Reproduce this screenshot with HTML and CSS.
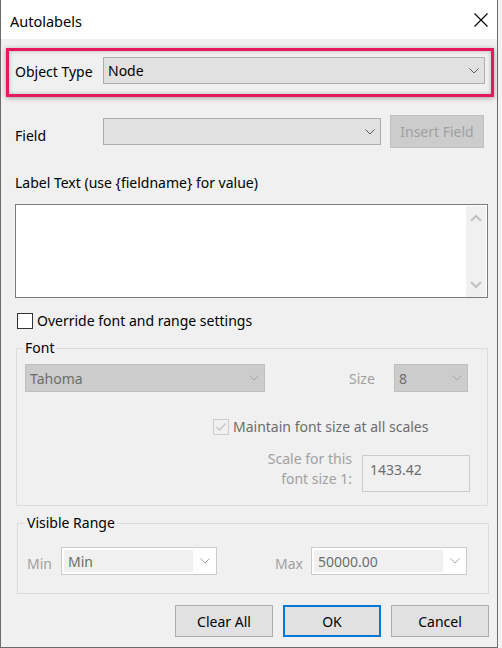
FILE: index.html
```html
<!DOCTYPE html>
<html>
<head>
<meta charset="utf-8">
<title>Autolabels</title>
<link rel="stylesheet" href="styles.css">
</head>
<body>
<div class="window">
  <div class="titlebar">
    <span class="title">Autolabels</span>
    <svg class="close" width="14" height="14" viewBox="0 0 14 14"><path d="M0.5 0.5 L13.5 13.5 M13.5 0.5 L0.5 13.5" stroke="#000" stroke-width="1.1" fill="none"/></svg>
  </div>
  <div class="main">
    <div class="highlight">
      <span class="lbl lbl-obj">Object Type</span>
      <div class="select grow">
        <span class="sel-text">Node</span>
        <svg class="chev" width="10" height="6" viewBox="0 0 10 6"><path d="M0.5 0.5 L5 5 L9.5 0.5" stroke="#5a5a5a" stroke-width="1" fill="none"/></svg>
      </div>
    </div>

    <div class="row-field">
      <span class="lbl lbl-low">Field</span>
      <div class="select field-select">
        <span></span>
        <svg class="chev" width="10" height="6" viewBox="0 0 10 6"><path d="M0.5 0.5 L5 5 L9.5 0.5" stroke="#5a5a5a" stroke-width="1" fill="none"/></svg>
      </div>
      <div class="btn-disabled">Insert Field</div>
    </div>

    <div class="label-text">Label Text (use {fieldname} for value)</div>

    <div class="textarea">
      <div class="text-body"></div>
      <div class="vscroll">
        <svg width="12" height="8" viewBox="0 0 12 8"><path d="M1 7 L6 2 L11 7" stroke="#c2c2c2" stroke-width="2" fill="none"/></svg>
        <svg width="12" height="8" viewBox="0 0 12 8"><path d="M1 1 L6 6 L11 1" stroke="#c2c2c2" stroke-width="2" fill="none"/></svg>
      </div>
    </div>

    <div class="check-row">
      <span class="checkbox"></span>
      <span>Override font and range settings</span>
    </div>

    <fieldset class="group font-group">
      <legend>Font</legend>
      <div class="font-row">
        <div class="select disabled font-select">
          <span class="sel-text">Tahoma</span>
          <svg class="chev" width="10" height="6" viewBox="0 0 10 6"><path d="M0.5 0.5 L5 5 L9.5 0.5" stroke="#a6a6a6" stroke-width="1" fill="none"/></svg>
        </div>
        <span class="size-lbl">Size</span>
        <div class="select disabled size-select">
          <span class="sel-text">8</span>
          <svg class="chev" width="10" height="6" viewBox="0 0 10 6"><path d="M0.5 0.5 L5 5 L9.5 0.5" stroke="#a6a6a6" stroke-width="1" fill="none"/></svg>
        </div>
      </div>
      <div class="maintain-row">
        <span class="checkbox checked">
          <svg width="14" height="14" viewBox="0 0 14 14"><path d="M2.5 7 L5.5 10 L11.5 3.5" stroke="#c8c8c8" stroke-width="1.4" fill="none"/></svg>
        </span>
        <span class="maintain-lbl">Maintain font size at all scales</span>
      </div>
      <div class="scale-row">
        <span class="scale-lbl">Scale for this<br>font size 1:</span>
        <div class="scale-box">1433.42</div>
      </div>
    </fieldset>

    <fieldset class="group range-group">
      <legend>Visible Range</legend>
      <div class="range-row">
        <span class="range-lbl min-lbl">Min</span>
        <div class="combo">
          <span class="combo-edit">Min</span>
          <span class="combo-arrow"><svg width="10" height="6" viewBox="0 0 10 6"><path d="M0.5 0.5 L5 5 L9.5 0.5" stroke="#a6a6a6" stroke-width="1" fill="none"/></svg></span>
        </div>
        <span class="range-lbl max-lbl">Max</span>
        <div class="combo">
          <span class="combo-edit">50000.00</span>
          <span class="combo-arrow"><svg width="10" height="6" viewBox="0 0 10 6"><path d="M0.5 0.5 L5 5 L9.5 0.5" stroke="#a6a6a6" stroke-width="1" fill="none"/></svg></span>
        </div>
      </div>
    </fieldset>

    <div class="buttons">
      <div class="btn">Clear All</div>
      <div class="btn default">OK</div>
      <div class="btn">Cancel</div>
    </div>
  </div>
</div>
</body>
</html>
```

FILE: styles.css
```css
* { box-sizing: border-box; }

body {
  margin: 0;
  background: #f3f3f3;
  font-family: "Noto Sans", "Open Sans", sans-serif;
  font-size: 14px;
  line-height: 20px;
  color: #000;
}

.window {
  width: 498px;
  height: 648px;
  border: 1px solid #6b6b6b;
  border-top: 0;
  background: #f0f0f0;
  display: flex;
  flex-direction: column;
}

.titlebar {
  height: 39px;
  flex: none;
  background: #fff;
  display: flex;
  align-items: center;
  justify-content: space-between;
  padding: 2px 9px 0 9px;
}
.title { font-size: 14.5px; }

.close { display: block; margin-top: -2px; }

.main {
  flex: 1;
  display: flex;
  flex-direction: column;
  padding: 9px 9px 0 14px;
}

.highlight {
  display: flex;
  align-items: center;
  margin: 0 -6px 0 -9px;
  border: 3px solid #e6175c;
  padding: 6px 6px 10px 6px;
  box-shadow: 0 1px 5px rgba(0, 0, 0, 0.35), inset 0 0 4px rgba(0, 0, 0, 0.25);
}

.lbl { width: 88px; flex: none; }
.lbl-obj { margin-top: 2px; }
.lbl-low { margin-top: 8px; }

.select {
  height: 27px;
  display: flex;
  align-items: center;
  justify-content: space-between;
  background: #e1e1e1;
  border: 1px solid #adadad;
  padding: 0 5px 0 4px;
}
.sel-text { margin-top: 1px; }
.select.grow { flex: 1; }
.chev { display: block; flex: none; }

.row-field {
  margin-top: 18px;
  display: flex;
  align-items: center;
  height: 33px;
}

.field-select { width: 278px; flex: none; padding-right: 5px; }

.btn-disabled {
  margin-left: 9px;
  width: 94px;
  height: 33px;
  background: #cccccc;
  border: 1px solid #bfbfbf;
  color: #a0a0a0;
  display: flex;
  align-items: center;
  justify-content: center;
  padding-top: 1px;
}

.label-text { margin-top: 24px; padding-top: 1px; }

.textarea {
  margin-top: 11px;
  height: 94px;
  border: 1px solid #7a7a7a;
  background: #fff;
  display: flex;
  padding: 1px 1px 0 0;
}
.text-body { flex: 1; }
.vscroll {
  width: 20px;
  height: 91px;
  background: #f0f0f0;
  display: flex;
  flex-direction: column;
  justify-content: space-between;
  align-items: center;
  padding: 8px 0 8px;
}
.vscroll svg { display: block; }

.check-row {
  margin-top: 13px;
  display: flex;
  align-items: center;
  gap: 4px;
  padding-left: 2px;
}

.checkbox {
  width: 16px;
  height: 16px;
  border: 1px solid #333;
  background: #fff;
  flex: none;
  display: flex;
  align-items: center;
  justify-content: center;
}
.checkbox.checked {
  border-color: #cccccc;
  background: #f0f0f0;
}
.checkbox svg { display: block; }

.group {
  border: 1px solid #dcdcdc;
  margin: 0;
  min-width: 0;
}
.group legend {
  padding: 0 2px;
  margin-left: -2px;
  line-height: 20px;
}

.font-group {
  margin: 7px 0 0 1px;
  padding: 6px 19px 13px 8px;
}

.font-row {
  display: flex;
  align-items: center;
  height: 28px;
}

.select.disabled {
  height: 28px;
  background: #cccccc;
  border-color: #bfbfbf;
  color: #6d6d6d;
}
.font-select { width: 240px; flex: none; }
.size-lbl {
  margin-left: auto;
  width: 45px;
  color: #a0a0a0;
  margin-top: 2px;
}
.size-select { width: 74px; flex: none; }

.maintain-row {
  margin-top: 24px;
  display: flex;
  align-items: center;
  gap: 4px;
  padding-left: 188px;
}
.maintain-lbl { color: #6d6d6d; margin-top: 1px; }

.scale-row {
  margin-top: 12px;
  display: flex;
  justify-content: flex-end;
  align-items: flex-start;
  margin-right: -2px;
}
.scale-lbl {
  text-align: right;
  color: #a0a0a0;
  margin-right: 10px;
}
.scale-box {
  margin-top: 6px;
  width: 108px;
  height: 37px;
  border: 1px solid #cccccc;
  background: #f0f0f0;
  color: #6d6d6d;
  padding: 4px 7px 2px;
}

.range-group {
  margin: 7px -1px 0 2px;
  padding: 14px 9px 18px 9px;
}

.range-row {
  display: flex;
  align-items: center;
  height: 28px;
}
.range-lbl { color: #a0a0a0; margin-top: 6px; flex: none; }
.min-lbl { width: 34px; }
.max-lbl { width: 36px; margin-left: 58px; }

.combo {
  width: 156px;
  height: 28px;
  flex: none;
  display: flex;
  border: 1px solid #cccccc;
  background: #fff;
  padding: 2px 0 2px 2px;
}
.combo-edit {
  flex: 1;
  background: #f0f0f0;
  color: #6d6d6d;
  padding: 1px 4px 0;
  line-height: 21px;
}
.combo-arrow {
  width: 23px;
  display: flex;
  align-items: center;
  justify-content: center;
}
.combo-arrow svg { display: block; }

.buttons {
  margin-top: 11px;
  margin-right: -1px;
  display: flex;
  justify-content: flex-end;
  gap: 10px;
}

.btn {
  width: 98px;
  height: 32px;
  background: #e1e1e1;
  border: 1px solid #adadad;
  display: flex;
  align-items: center;
  justify-content: center;
  padding-top: 2px;
}
.btn.default { border: 2px solid #0078d7; }
```
